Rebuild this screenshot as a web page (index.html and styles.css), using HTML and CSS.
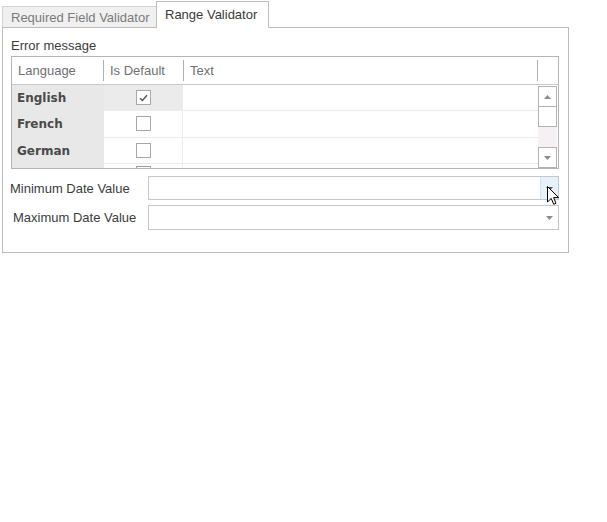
FILE: index.html
```html
<!DOCTYPE html>
<html>
<head>
<meta charset="utf-8">
<link rel="stylesheet" href="styles.css">
</head>
<body>
<div class="root">
  <div class="tabs">
    <div class="tab inactive">Required Field Validator</div>
    <div class="tab active">Range Validator</div>
  </div>
  <div class="panel">
    <div class="caption">Error message</div>
    <div class="grid">
      <div class="header">
        <div class="hcell c-lang"><span>Language</span></div>
        <div class="hcell c-def"><span>Is Default</span></div>
        <div class="hcell c-text"><span>Text</span></div>
        <div class="hcell c-scroll"></div>
      </div>
      <div class="body">
        <div class="rows">
          <div class="row focused">
            <div class="cell c-lang name">English</div>
            <div class="cell c-def"><span class="check on"><svg width="9" height="8" viewBox="0 0 9 8"><path d="M1 4.2 L3.4 6.5 L8 1.3" fill="none" stroke="#555" stroke-width="1.4"/></svg></span></div>
            <div class="cell c-text"></div>
          </div>
          <div class="row tall">
            <div class="cell c-lang name">French</div>
            <div class="cell c-def"><span class="check"></span></div>
            <div class="cell c-text"></div>
          </div>
          <div class="row">
            <div class="cell c-lang name">German</div>
            <div class="cell c-def"><span class="check"></span></div>
            <div class="cell c-text"></div>
          </div>
          <div class="row last">
            <div class="cell c-lang name"></div>
            <div class="cell c-def"><span class="check partial"></span></div>
            <div class="cell c-text"></div>
          </div>
        </div>
        <div class="vscroll">
          <div class="sbtn"><svg width="7" height="4" viewBox="0 0 7 4"><path d="M0 4 L3.5 0 L7 4 Z" fill="#8a8a8a"/></svg></div>
          <div class="thumb"></div>
          <div class="track"></div>
          <div class="sbtn"><svg width="7" height="4" viewBox="0 0 7 4"><path d="M0 0 L7 0 L3.5 4 Z" fill="#8a8a8a"/></svg></div>
        </div>
      </div>
    </div>
    <div class="field">
      <div class="label">Minimum Date Value</div>
      <div class="input">
        <div class="ddbtn hot"><svg width="7" height="4" viewBox="0 0 7 4"><path d="M0 0 L7 0 L3.5 4 Z" fill="#555"/></svg></div>
        <svg class="cursor" width="13" height="20" viewBox="0 0 13 20"><path d="M0.5 0.5 L0.5 16 L4.2 12.4 L6.7 18.3 L9 17.3 L6.6 11.6 L11.6 11.6 Z" fill="#fff" stroke="#000" stroke-width="1" stroke-linejoin="miter"/></svg>
      </div>
    </div>
    <div class="field second">
      <div class="label">Maximum Date Value</div>
      <div class="input">
        <div class="ddbtn"><svg width="7" height="4" viewBox="0 0 7 4"><path d="M0 0 L7 0 L3.5 4 Z" fill="#8c8c8c"/></svg></div>
      </div>
    </div>
  </div>
</div>
</body>
</html>
```

FILE: styles.css
```css
* { box-sizing: border-box; }
html, body { margin: 0; padding: 0; background: #fff; }
body {
  font-family: "Liberation Sans", Arial, sans-serif;
  font-size: 13px;
  color: #3c3c3c;
}
.root {
  padding: 1px 0 0 2px;
  width: 569px;
}
.tabs {
  display: flex;
  align-items: flex-end;
}
.tab {
  display: flex;
  align-items: center;
  padding-left: 8px;
  white-space: nowrap;
}
.tab.inactive {
  width: 154px;
  height: 21px;
  background: #f0f0f0;
  border: 1px solid #d3d3d3;
  border-right: none;
  border-bottom: none;
  color: #7a7a7a;
}
.tab.active {
  width: 113px;
  height: 27px;
  margin-bottom: -1px;
  background: #fff;
  border: 1px solid #bdbdbd;
  border-bottom: none;
  position: relative;
  z-index: 1;
  color: #3a3a3a;
  padding-bottom: 1px;
}
.panel {
  width: 567px;
  height: 226px;
  border: 1px solid #bdbdbd;
  padding: 10px 9px 0 7px;
}
.caption {
  line-height: 15px;
  height: 15px;
  padding-left: 1px;
  color: #3c3c3c;
}
.grid {
  margin-top: 3px;
  margin-left: 1px;
  width: 548px;
  height: 113px;
  border: 1px solid #b5b5b5;
  display: flex;
  flex-direction: column;
}
.header {
  display: flex;
  height: 28px;
  border-bottom: 1px solid #c9c9c9;
  flex: none;
}
.hcell {
  height: 27px;
  display: flex;
  align-items: center;
  color: #707070;
}
.hcell span {
  display: block;
  padding-left: 6px;
  line-height: 15px;
}
.c-lang { width: 92px; }
.c-def { width: 79px; }
.c-text { width: 355px; }
.header .c-def span, .header .c-text span {
  border-left: 1px solid #b0b0b0;
  height: 21px;
  display: flex;
  align-items: center;
}
.header .c-def span { margin-left: -1px; }
.header .c-scroll { width: 20px; }
.header .c-scroll::before {
  content: "";
  display: block;
  width: 1px;
  height: 21px;
  background: #b0b0b0;
  margin-left: -1px;
}
.body {
  display: flex;
  flex: 1;
  overflow: hidden;
}
.rows {
  width: 526px;
  display: flex;
  flex-direction: column;
}
.row {
  display: flex;
  height: 26px;
  flex: none;
}
.row.tall { height: 27px; }
.cell {
  height: 100%;
  display: flex;
  align-items: center;
}
.row .c-def, .row .c-text {
  border-bottom: 1px solid #ececec;
}
.row .c-def {
  justify-content: center;
  border-right: 1px solid #ececec;
  align-items: flex-start;
  padding-top: 5px;
}
.row.last .c-def { padding-top: 2px; }
.check.partial { border-top-color: #9a9a9a; }
.row .c-text { width: 355px; }
.name {
  background: #e8e8e8;
  font-family: "DejaVu Sans", Verdana, sans-serif;
  font-weight: bold;
  font-size: 12px;
  color: #4a4a4a;
  padding-left: 5px;
  padding-bottom: 1px;
}
.row.focused .c-def { background: #ebebeb; border-bottom-color: #ebebeb; }
.check {
  width: 15px;
  height: 15px;
  border: 1px solid #a8a8a8;
  background: #fff;
  display: flex;
  align-items: center;
  justify-content: center;
}
.vscroll {
  width: 20px;
  display: flex;
  flex-direction: column;
  padding: 1px 0 0 0;
}
.sbtn, .thumb {
  width: 19px;
  border: 1px solid #b3b3b3;
  background: #fff;
  display: flex;
  align-items: center;
  justify-content: center;
}
.sbtn { height: 21px; }
.thumb { height: 21px; margin-top: -1px; }
.track {
  flex: 1;
  background: #f5f0f3;
  width: 19px;
}
.field {
  display: flex;
  align-items: center;
  margin-top: 7px;
}
.field.second { margin-top: 5px; }
.label {
  width: 138px;
  flex: none;
}
.field.second .label { padding-left: 3px; }
.input {
  width: 411px;
  height: 24px;
  border: 1px solid #c8c8c8;
  display: flex;
  justify-content: flex-end;
  position: relative;
}
.field.second .input { height: 25px; }
.ddbtn {
  width: 18px;
  height: 100%;
  display: flex;
  align-items: center;
  justify-content: center;
  padding-top: 1px;
}
.ddbtn.hot {
  background: #e5f1fb;
  border-left: 1px solid #cfe3f5;
}
.cursor {
  position: absolute;
  left: 398px;
  top: 9px;
}
```
